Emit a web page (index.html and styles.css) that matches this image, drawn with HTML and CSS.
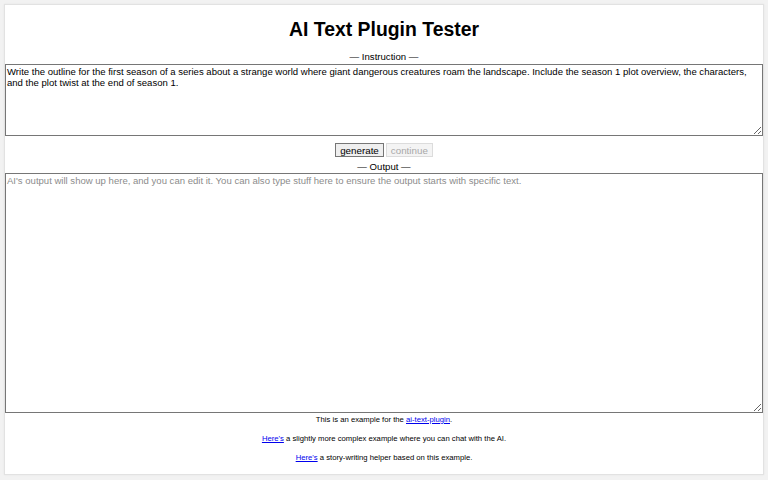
FILE: index.html
```html
<!DOCTYPE html>
<html lang="en">
<head>
    <meta charset="UTF-8">
    <meta name="viewport" content="width=device-width, initial-scale=1.0">
    <title>AI Text Plugin Tester</title>
    <link rel="stylesheet" href="styles.css">
</head>
<body>
    <div class="page">
        <h1>AI Text Plugin Tester</h1>

        <div class="label first">— Instruction —</div>
        <textarea class="instruction" id="instruction">Write the outline for the first season of a series about a strange world where giant dangerous creatures roam the landscape. Include the season 1 plot overview, the characters, and the plot twist at the end of season 1.</textarea>

        <div class="buttons">
            <button type="button" id="generate_btn">generate</button>
            <button type="button" id="continue_btn" disabled>continue</button>
        </div>

        <div class="label">— Output —</div>
        <textarea class="output" id="output" placeholder="AI's output will show up here, and you can edit it. You can also type stuff here to ensure the output starts with specific text."></textarea>

        <div class="notes">
            <p>This is an example for the <a href="#">ai-text-plugin</a>.</p>
            <p><a href="#">Here's</a> a slightly more complex example where you can chat with the AI.</p>
            <p><a href="#">Here's</a> a story-writing helper based on this example.</p>
        </div>
    </div>
</body>
</html>
```

FILE: styles.css
```css
body {
    margin: 0;
    padding: 4px;
    background-color: #f2f2f2;
    font-family: "Liberation Sans", Arial, sans-serif;
}

.page {
    background-color: white;
    border: 1px solid #e2e2e2;
    box-shadow: 0 0 2px rgba(0, 0, 0, 0.06);
    height: 471px;
    box-sizing: border-box;
    text-align: center;
}

h1 {
    font-size: 19.4px;
    margin: 0;
    padding-top: 13px;
    height: 32px;
    line-height: 22px;
}

.label {
    font-size: 9.6px;
    line-height: 12px;
    height: 12px;
}

.label.first {
    margin-top: 1px;
    height: 13px;
}

textarea {
    display: block;
    width: 100%;
    box-sizing: border-box;
    margin: 0;
    padding: 1px 1px;
    border: 1px solid #767676;
    font-family: "Liberation Sans", Arial, sans-serif;
    font-size: 9.55px;
    line-height: 11px;
    resize: vertical;
}

.instruction {
    height: 72px;
}

.output {
    height: 240px;
}

.output::placeholder {
    color: #8c8c8c;
}

.buttons {
    padding-top: 7px;
    height: 18px;
    font-size: 0;
}

button {
    font-family: "Liberation Sans", Arial, sans-serif;
    font-size: 9.8px;
    line-height: 11px;
    height: 14px;
    padding: 0 4px;
    margin: 0 1px;
    border: 1px solid #767676;
    border-radius: 0;
    background-color: #efefef;
    color: black;
}

button:disabled {
    border-color: #dcdcdc;
    color: #a8a8a8;
    background-color: #f4f4f4;
}

.notes {
    font-size: 7.7px;
    padding-top: 2px;
}

.notes p {
    margin: 0 0 9px 0;
    line-height: 10px;
}

.notes a {
    color: #0000ee;
}
```
